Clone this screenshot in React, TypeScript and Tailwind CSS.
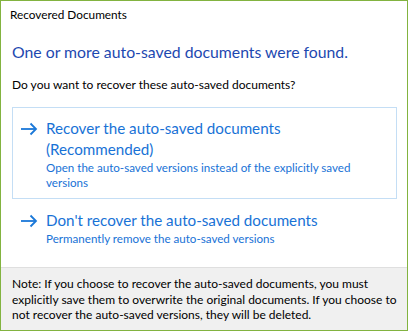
import React from "react"

function Arrow() {
    return (
        <svg width="18" height="14" viewBox="0 0 18 14" className="shrink-0 mt-[4px]">
            <path d="M1 7 H16" stroke="#1a78d8" strokeWidth="1.8" fill="none" />
            <path d="M10.5 1.5 L16 7 L10.5 12.5" stroke="#1a78d8" strokeWidth="1.8" fill="none" />
        </svg>
    )
}

type OptionProps = {
    title: React.ReactNode
    description: React.ReactNode
    bordered?: boolean
}

function Option({ title, description, bordered }: OptionProps) {
    return (
        <div className={`ml-[11px] w-[385px] flex gap-[8px] pl-[7px] pt-[10px] pb-[8px] border ${bordered ? "border-[#c4def5]" : "border-transparent"}`}>
            <Arrow />
            <div>
                <div className="text-[15.2px] leading-[21px] text-[#1872d6]">{title}</div>
                <div className="text-[11.6px] leading-[15px] text-[#1872d6]">{description}</div>
            </div>
        </div>
    )
}

export default function App() {
    return (
        <div className="w-[408px] h-[331px] border border-[#82b340] bg-white flex flex-col text-black" style={{ fontFamily: 'Lato, "Noto Sans", sans-serif' }}>
            <div className="pl-[9px] pt-[6px] text-[11.8px] leading-[16px]">Recovered Documents</div>
            <div className="pl-[11px] mt-[19px] text-[15.8px] leading-[20px] text-[#1d48b0]">One or more auto-saved documents were found.</div>
            <div className="pl-[11px] mt-[15px] text-[12px] leading-[16px]">Do you want to recover these auto-saved documents?</div>
            <div className="mt-[14px]">
                <Option
                    bordered
                    title={<>Recover the auto-saved documents<br />(Recommended)</>}
                    description={<>Open the auto-saved versions instead of the explicitly saved<br />versions</>}
                />
                <Option
                    title="Don't recover the auto-saved documents"
                    description="Permanently remove the auto-saved versions"
                />
            </div>
            <div className="mt-auto h-[63px] bg-[#f0f0f0] border-t border-[#dfdfdf] pl-[11px] pt-[8px] text-[12px] leading-[15.5px] whitespace-nowrap">
                Note: If you choose to recover the auto-saved documents, you must<br />
                explicitly save them to overwrite the original documents. If you choose to<br />
                not recover the auto-saved versions, they will be deleted.
            </div>
        </div>
    )
}
